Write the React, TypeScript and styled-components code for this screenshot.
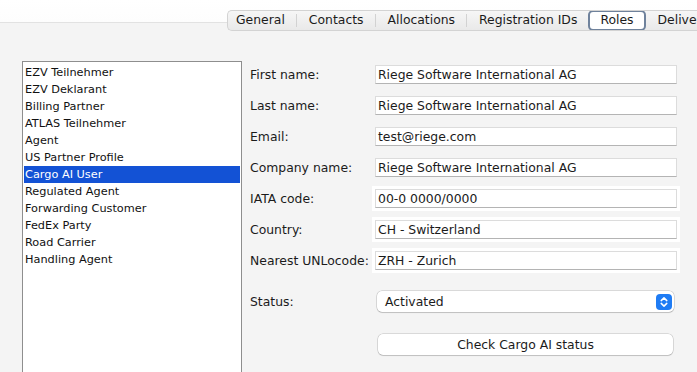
import React from 'react';
import styled, {createGlobalStyle} from "styled-components";

const GlobalStyle = createGlobalStyle`
    html, body {
        margin: 0;
        padding: 0;
    }
    body {
        font-family: "DejaVu Sans", "Liberation Sans", sans-serif;
        color: #1b1b1b;
        background: #f4f4f4;
        overflow: hidden;
    }
`

const tabs = ['General', 'Contacts', 'Allocations', 'Registration IDs', 'Roles', 'Delivery']
const selectedTab = 'Roles'

const roles = [
    'EZV Teilnehmer',
    'EZV Deklarant',
    'Billing Partner',
    'ATLAS Teilnehmer',
    'Agent',
    'US Partner Profile',
    'Cargo AI User',
    'Regulated Agent',
    'Forwarding Customer',
    'FedEx Party',
    'Road Carrier',
    'Handling Agent',
]
const selectedRole = 'Cargo AI User'

type FieldData = {
    label: string
    value: string
    halo?: boolean
}

const fields: FieldData[] = [
    {label: 'First name:', value: 'Riege Software International AG'},
    {label: 'Last name:', value: 'Riege Software International AG'},
    {label: 'Email:', value: 'test@riege.com'},
    {label: 'Company name:', value: 'Riege Software International AG'},
    {label: 'IATA code:', value: '00-0 0000/0000', halo: true},
    {label: 'Country:', value: 'CH - Switzerland', halo: true},
    {label: 'Nearest UNLocode:', value: 'ZRH - Zurich', halo: true},
]

const Stepper = () => (
    <svg width="16" height="16" viewBox="0 0 16 16">
        <rect x="0" y="0" width="16" height="16" rx="4" fill="#1f7cf4"/>
        <path d="M5.2 6.6 L8 3.9 L10.8 6.6" fill="none" stroke="#fff" strokeWidth="1.5"
              strokeLinecap="round" strokeLinejoin="round"/>
        <path d="M5.2 9.4 L8 12.1 L10.8 9.4" fill="none" stroke="#fff" strokeWidth="1.5"
              strokeLinecap="round" strokeLinejoin="round"/>
    </svg>
)

export default function App() {
    return (
        <Page>
            <GlobalStyle/>
            <Header>
                <Rule/>
                <TabBar>
                    {tabs.map(t => (
                        <Tab key={t} $selected={t === selectedTab}>{t}</Tab>
                    ))}
                </TabBar>
            </Header>
            <Body>
                <RoleList>
                    {roles.map(r => (
                        <RoleItem key={r} $selected={r === selectedRole}>{r}</RoleItem>
                    ))}
                </RoleList>
                <Form>
                    {fields.map(f => (
                        <React.Fragment key={f.label}>
                            <Label>{f.label}</Label>
                            <TextField $halo={f.halo}>{f.value}</TextField>
                        </React.Fragment>
                    ))}
                    <Label $top={9} $tall>Status:</Label>
                    <Select $top={9}>
                        <span>Activated</span>
                        <Stepper/>
                    </Select>
                    <span/>
                    <Button $top={10}>Check Cargo AI status</Button>
                </Form>
            </Body>
        </Page>
    );
}

const Page = styled.div`
    width: 697px;
    height: 372px;
    overflow: hidden;
    background: linear-gradient(#ffffff 0, #fdfdfd 22px, #e2e2e2 22px, #e2e2e2 23px, #f4f4f4 23px);
    font-size: 12.4px;
`

const Header = styled.div`
    display: flex;
    align-items: flex-start;
    padding-top: 10px;
    height: 21px;
`

const Rule = styled.div`
    flex: 0 0 227px;
`

const TabBar = styled.div`
    display: flex;
    flex: 1;
    height: 21px;
    box-sizing: border-box;
    border: 1px solid #d3d3d3;
    border-right: none;
    border-radius: 5px 0 0 5px;
    background: linear-gradient(#f6f6f6, #e9e9e9);
    white-space: nowrap;
    overflow: hidden;
`

const Tab = styled.div<{ $selected?: boolean }>`
    position: relative;
    display: flex;
    align-items: center;
    padding: 0 12px;
    margin-top: -1px;
    height: 21px;
    box-sizing: border-box;
    line-height: 1;

    &:first-child {
        padding-left: 8px;
    }

    & + &::before {
        content: '';
        position: absolute;
        left: -1px;
        top: 4px;
        height: 13px;
        width: 1px;
        background: #d2d2d2;
    }

    ${p => p.$selected && `
        background: #ffffff;
        border: 2px solid #6f829c;
        border-radius: 5px;
        padding: 0 10px;
        margin-left: -1px;
        &::before { display: none; }
        & + *::before { display: none; }
    `}
`

const Body = styled.div`
    display: flex;
    align-items: flex-start;
    gap: 8px;
    padding: 30px 0 0 22px;
`

const RoleList = styled.ul`
    list-style: none;
    margin: 0;
    padding: 2px 1px;
    width: 220px;
    height: 330px;
    box-sizing: border-box;
    background: #ffffff;
    border: 1px solid #8e8e8e;
    font-size: 11.3px;
`

const RoleItem = styled.li<{ $selected?: boolean }>`
    height: 17px;
    line-height: 17px;
    padding-left: 1px;
    white-space: nowrap;
    background: ${p => p.$selected ? '#1352d5' : 'transparent'};
    color: ${p => p.$selected ? '#ffffff' : '#111111'};
`

const Form = styled.div`
    display: grid;
    grid-template-columns: 125px 302px;
    grid-auto-rows: min-content;
    row-gap: 12px;
    padding-top: 4px;
`

const Label = styled.div<{ $top?: number, $tall?: boolean }>`
    display: flex;
    align-items: center;
    height: ${p => p.$tall ? 21 : 19}px;
    margin-top: ${p => p.$top ?? 0}px;
    white-space: nowrap;
`

const TextField = styled.div<{ $halo?: boolean }>`
    height: 19px;
    box-sizing: border-box;
    display: flex;
    align-items: center;
    padding: 0 2px;
    background: #ffffff;
    border: 1px solid #dcdcdc;
    border-bottom-color: #b4b4b4;
    white-space: nowrap;
    overflow: hidden;
    ${p => p.$halo ? 'box-shadow: 0 0 0 3px #ffffff;' : ''}
`

const Select = styled.div<{ $top?: number }>`
    margin: ${p => p.$top ?? 0}px 3px 0 2px;
    height: 21px;
    box-sizing: border-box;
    display: flex;
    align-items: center;
    justify-content: space-between;
    padding: 0 2px 0 8px;
    background: #ffffff;
    border-radius: 5px;
    box-shadow: 0 0 0 0.5px rgba(0, 0, 0, 0.22), 0 1px 1px rgba(0, 0, 0, 0.12);
`

const Button = styled.div<{ $top?: number }>`
    margin: ${p => p.$top ?? 0}px 4px 0 3px;
    height: 21px;
    box-sizing: border-box;
    display: flex;
    align-items: center;
    justify-content: center;
    background: #ffffff;
    border-radius: 5px;
    box-shadow: 0 0 0 0.5px rgba(0, 0, 0, 0.22), 0 1px 1px rgba(0, 0, 0, 0.12);
`
